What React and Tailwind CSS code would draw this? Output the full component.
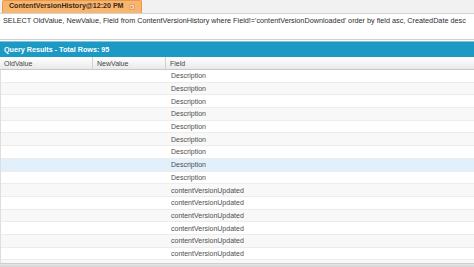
const ROWS = [
  ...Array(9).fill('Description'),
  ...Array(8).fill('contentVersionUpdated'),
];

const QUERY =
  "SELECT OldValue, NewValue, Field from ContentVersionHistory where Field!='contentVersionDownloaded' order by field asc, CreatedDate desc";

export default function App() {
  return (
    <div
      className="w-[474px] h-[267px] overflow-hidden bg-white flex flex-col text-[7px] leading-none"
      style={{ fontFamily: '"Liberation Sans", Arial, sans-serif' }}
    >
      {/* tab strip */}
      <div className="h-[14px] shrink-0 bg-[#f1f1f1] border-b border-[#d4d4d4] flex items-end pl-[2px]">
        <div className="h-[13px] px-[6px] flex items-center gap-[5px] bg-[#f9b46d] border border-b-0 border-[#e89a4c] rounded-t-[2px]">
          <span className="font-bold text-[7.1px] text-[#3a2a18]">ContentVersionHistory@12:20 PM</span>
          <span className="w-[6px] h-[6px] rounded-[1px] bg-[#fbd4a9] border border-[#e3a264] flex items-center justify-center text-[5px] text-[#a0703c]">
            ×
          </span>
        </div>
      </div>

      {/* query text */}
      <div className="h-[26px] shrink-0 px-[3px] pt-[3px] text-[7.25px] text-[#2e2e2e] border-b border-[#cfcfcf] whitespace-nowrap">
        {QUERY}
      </div>

      {/* results bar */}
      <div className="h-[16px] shrink-0 mt-[1px] bg-[#1c9ac4] border-t border-[#7ec4dd] flex items-center px-[4px] font-bold text-[7.2px] text-white">
        Query Results - Total Rows: 95
      </div>

      {/* header */}
      <div className="h-[13px] shrink-0 flex bg-gradient-to-b from-white to-[#e9e9e9] border-b border-[#c9c9c9] text-[#444]">
        <div className="w-[93px] px-[4px] flex items-center border-r border-[#d2d2d2]">OldValue</div>
        <div className="w-[73px] px-[4px] flex items-center border-r border-[#d2d2d2]">NewValue</div>
        <div className="flex-1 px-[4px] flex items-center">Field</div>
      </div>

      {/* rows */}
      <div className="flex-1 min-h-0 overflow-hidden border-l border-[#dedede]">
        {ROWS.map((field, i) => (
          <div
            key={i}
            className={
              'h-[12.7px] flex border-b border-[#ececec] text-[#4e4e4e] ' +
              (i === 7 ? 'bg-[#e2f0fc]' : i % 2 === 1 ? 'bg-[#f8f8f8]' : 'bg-white')
            }
          >
            <div className="w-[93px]" />
            <div className="w-[73px]" />
            <div className="flex-1 px-[4px] flex items-center">{field}</div>
          </div>
        ))}
      </div>

      {/* scrollbar strip */}
      <div className="h-[4px] shrink-0 bg-gradient-to-b from-[#e6e6e6] to-[#d6d6d6] border-t border-[#cfcfcf]" />
    </div>
  );
}
